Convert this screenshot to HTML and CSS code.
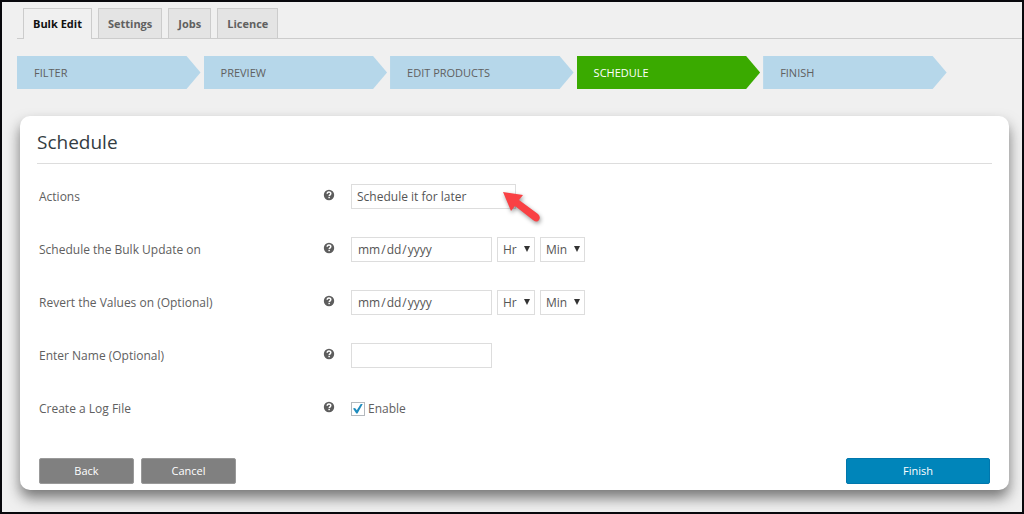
FILE: index.html
```html
<!DOCTYPE html>
<html lang="en">
<head>
<meta charset="utf-8">
<title>Bulk Edit - Schedule</title>
<link rel="stylesheet" href="styles.css">
</head>
<body>
<svg class="sprite" aria-hidden="true">
  <symbol id="help" viewBox="0 0 12 12">
    <circle cx="6" cy="6" r="5.2" fill="#5d5d5d"/>
    <path d="M4.2 4.7C4.2 2.4 7.8 2.4 7.8 4.6C7.8 5.8 6.2 5.8 6.2 7.1" fill="none" stroke="#fff" stroke-width="1.5"/>
    <rect x="5.4" y="7.8" width="1.5" height="1.4" fill="#fff"/>
  </symbol>
</svg>
<nav class="tabs">
  <a class="tab tab-active" href="#">Bulk Edit</a>
  <a class="tab" href="#">Settings</a>
  <a class="tab" href="#">Jobs</a>
  <a class="tab" href="#">Licence</a>
</nav>
<ol class="steps">
  <li class="step">FILTER</li>
  <li class="step">PREVIEW</li>
  <li class="step">EDIT PRODUCTS</li>
  <li class="step step-active">SCHEDULE</li>
  <li class="step">FINISH</li>
</ol>
<main class="card">
  <h1 class="title">Schedule</h1>
  <form class="form">
    <div class="row">
      <label class="label" for="action">Actions</label>
      <svg class="help"><use href="#help"/></svg>
      <div class="fields">
        <select class="control action" id="action"><option>Schedule it for later</option></select>
        <svg class="pointer" viewBox="0 0 42 36" aria-hidden="true">
          <path d="M2 3L22 6L18 11L37 25Q40 28 38 31Q36 34 32 31L14 17L10 22Z" fill="#f94144"/>
        </svg>
      </div>
    </div>
    <div class="row">
      <label class="label" for="update">Schedule the Bulk Update on</label>
      <svg class="help"><use href="#help"/></svg>
      <div class="fields">
        <input class="control date" id="update" type="date">
        <span class="drop"><select class="control hour" aria-label="Update hour"><option>Hr</option></select></span>
        <span class="drop"><select class="control minute" aria-label="Update minute"><option>Min</option></select></span>
      </div>
    </div>
    <div class="row">
      <label class="label" for="revert">Revert the Values on (Optional)</label>
      <svg class="help"><use href="#help"/></svg>
      <div class="fields">
        <input class="control date" id="revert" type="date">
        <span class="drop"><select class="control hour" aria-label="Revert hour"><option>Hr</option></select></span>
        <span class="drop"><select class="control minute" aria-label="Revert minute"><option>Min</option></select></span>
      </div>
    </div>
    <div class="row">
      <label class="label" for="name">Enter Name (Optional)</label>
      <svg class="help"><use href="#help"/></svg>
      <div class="fields"><input class="control name" id="name" type="text"></div>
    </div>
    <div class="row">
      <span class="label">Create a Log File</span>
      <svg class="help"><use href="#help"/></svg>
      <div class="fields"><label class="enable"><input class="check" type="checkbox" checked>Enable</label></div>
    </div>
    <div class="actions">
      <button class="button" type="button">Back</button>
      <button class="button" type="button">Cancel</button>
      <button class="button button-primary" type="submit">Finish</button>
    </div>
  </form>
</main>
</body>
</html>
```

FILE: styles.css
```css
* {
  box-sizing: border-box;
}

body {
  margin: 0;
  min-height: 100vh;
  padding: 6px 0 20px 15px;
  border: 2px solid #08080c;
  background: #f0f0f0;
  color: #606060;
  font: 12px/18px "Open Sans", "Noto Sans", sans-serif;
}

.sprite {
  display: none;
}

.tabs {
  display: flex;
  gap: 6px;
  padding-left: 6px;
  border-bottom: 1px solid #ccc;
}

.tab {
  height: 30px;
  padding: 6px 9px;
  border: 1px solid #ccc;
  border-bottom: 0;
  background: #e4e4e4;
  color: #606060;
  font-size: 11px;
  font-weight: 700;
  text-decoration: none;
}

.tab-active {
  margin-bottom: -1px;
  height: 31px;
  background: #f0f0f0;
  color: #111;
}

.steps {
  display: flex;
  gap: 3px;
  width: 92.5%;
  margin: 17px 0 27px;
  padding: 0;
  list-style: none;
}

.step {
  flex: 1;
  padding: 8px 17px 7px;
  background: #b6d7ea;
  clip-path: polygon(0 0, calc(100% - 14px) 0, 100% 50%, calc(100% - 14px) 100%, 0 100%);
  font-size: 11px;
}

.step-active {
  background: #3aaa00;
  color: #fff;
}

.card {
  margin: 0 13px 0 3px;
  padding: 11px 17px 6px;
  border-radius: 10px;
  background: #fff;
  box-shadow: 0 8px 14px #777;
}

.title {
  margin: 0;
  padding-bottom: 6px;
  border-bottom: 1px solid #ddd;
  color: #333c42;
  font-size: 19px;
  font-weight: 400;
  line-height: 30px;
}

.form {
  padding: 6px 2px 0;
}

.row {
  display: grid;
  grid-template-columns: 284px 28px 1fr;
  align-items: center;
  height: 53px;
}

.help {
  width: 12px;
  height: 12px;
  margin-bottom: 4px;
}

.fields {
  position: relative;
  display: flex;
  align-items: center;
  gap: 5px;
}

.control {
  appearance: none;
  height: 25px;
  margin: 0;
  padding: 0 5px;
  border: 1px solid #ddd;
  border-radius: 0;
  background: #fff;
  color: #555;
  font: inherit;
}

.action {
  width: 165px;
}

.date {
  width: 141px;
}

.date::-webkit-calendar-picker-indicator {
  display: none;
}

.name {
  width: 141px;
}

.hour {
  width: 38px;
}

.minute {
  width: 45px;
}

.drop {
  position: relative;
  display: flex;
}

.drop::after {
  content: "";
  position: absolute;
  top: 9px;
  right: 5px;
  width: 6px;
  height: 6px;
  background: #333;
  clip-path: polygon(0 0, 100% 0, 50% 100%);
  pointer-events: none;
}

.pointer {
  position: absolute;
  top: 5px;
  left: 150px;
  width: 42px;
  height: 36px;
  overflow: visible;
  filter: drop-shadow(1px 2px 2px #0006);
  pointer-events: none;
}

.enable {
  display: flex;
  align-items: center;
  gap: 3px;
}

.check {
  appearance: none;
  width: 14px;
  height: 14px;
  margin: 0;
  border: 1px solid #b4b9be;
  background: #fff;
}

.check:checked::before {
  content: "";
  display: block;
  width: 10px;
  height: 10px;
  margin: 1px;
  background: #1e8cbe;
  clip-path: polygon(0 50%, 20% 45%, 38% 68%, 80% 0, 100% 0, 45% 100%, 33% 100%);
}

.actions {
  display: flex;
  gap: 7px;
  padding-top: 23px;
}

.button {
  width: 95px;
  height: 26px;
  padding: 0;
  border: 1px solid #999;
  border-radius: 2px;
  background: #808080;
  color: #fff;
  font: inherit;
  font-size: 11px;
}

.button-primary {
  width: 144px;
  margin-left: auto;
  border-color: #0077ad;
  background: #0085ba;
}
```
